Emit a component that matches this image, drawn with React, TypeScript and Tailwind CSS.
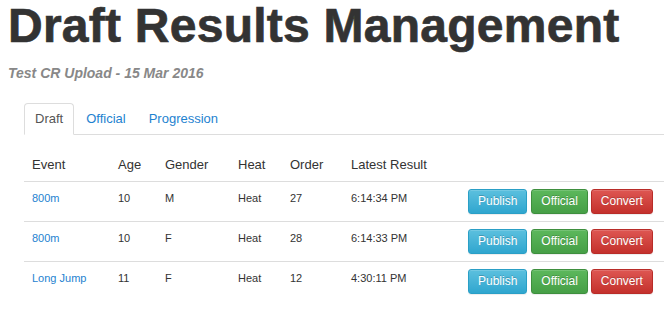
import React from "react";

const rows = [
  { event: "800m", age: "10", gender: "M", heat: "Heat", order: "27", result: "6:14:34 PM" },
  { event: "800m", age: "10", gender: "F", heat: "Heat", order: "28", result: "6:14:33 PM" },
  { event: "Long Jump", age: "11", gender: "F", heat: "Heat", order: "12", result: "4:30:11 PM" },
];

const cols = "grid grid-cols-[86px_47px_73px_52px_61px_117px_1fr]";

function Btn({ label, tone, className = "" }: { label: string; tone: "info" | "success" | "danger"; className?: string }) {
  const tones = {
    info: "bg-gradient-to-b from-[#5bc0de] to-[#2ea6cf] border-[#2a9fc6]",
    success: "bg-gradient-to-b from-[#5cb85c] to-[#469f46] border-[#3e8f3e]",
    danger: "bg-gradient-to-b from-[#de5652] to-[#c4302c] border-[#b92c28]",
  };
  return (
    <button
      className={`h-[25px] px-[9px] rounded-[3px] border text-[12px] leading-[18px] text-white [text-shadow:0_-1px_0_rgba(0,0,0,0.2)] shadow-[inset_0_1px_0_rgba(255,255,255,0.15),0_1px_1px_rgba(0,0,0,0.075)] ${tones[tone]} ${className}`}
    >
      {label}
    </button>
  );
}

export default function App() {
  return (
    <div className="w-[664px] h-[312px] overflow-hidden bg-white px-2 font-['Liberation_Sans',Arial,sans-serif] text-[#333]">
      <h1 className="text-[48px] leading-[1.1] font-bold tracking-[0.25px] whitespace-nowrap [-webkit-text-stroke:0.7px_#333]">
        Draft Results Management
      </h1>
      <p className="mt-[10px] text-[14px] leading-[20px] font-bold italic text-[#888]">
        Test CR Upload - 15 Mar 2016
      </p>

      <div className="ml-4 mr-[-8px]">
        {/* tabs */}
        <ul className="mt-5 flex border-b border-[#ddd] text-[13px] leading-[20px]">
          <li className="mr-px -mb-px">
            <span className="block px-[10px] py-[5px] border border-[#ddd] border-b-white rounded-t-[4px] bg-white text-[#555]">
              Draft
            </span>
          </li>
          <li className="mr-px -mb-px">
            <span className="block px-[10px] py-[5px] border border-transparent text-[#1e82d0]">Official</span>
          </li>
          <li className="mr-px -mb-px">
            <span className="block px-[10px] py-[5px] border border-transparent text-[#1e82d0]">Progression</span>
          </li>
        </ul>

        {/* table */}
        <div className={`${cols} text-[13px] leading-[20px] text-[#333]`}>
          {["Event", "Age", "Gender", "Heat", "Order", "Latest Result", ""].map((h, i) => (
            <div key={i} className="pl-2 pt-5 pb-[6px] whitespace-nowrap">
              {h}
            </div>
          ))}
        </div>
        {rows.map((r, i) => (
          <div key={i} className={`${cols} h-10 border-t border-[#ddd] text-[11px] leading-[16px]`}>
            <div className="pl-2 pt-2 text-[#1e82d0] whitespace-nowrap">{r.event}</div>
            <div className="pl-2 pt-2">{r.age}</div>
            <div className="pl-2 pt-2">{r.gender}</div>
            <div className="pl-2 pt-2">{r.heat}</div>
            <div className="pl-2 pt-2">{r.order}</div>
            <div className="pl-2 pt-2">{r.result}</div>
            <div className="pl-2 pt-[7px] flex">
              <Btn label="Publish" tone="info" />
              <Btn label="Official" tone="success" className="ml-1" />
              <Btn label="Convert" tone="danger" className="ml-[3px]" />
            </div>
          </div>
        ))}
      </div>
    </div>
  );
}
